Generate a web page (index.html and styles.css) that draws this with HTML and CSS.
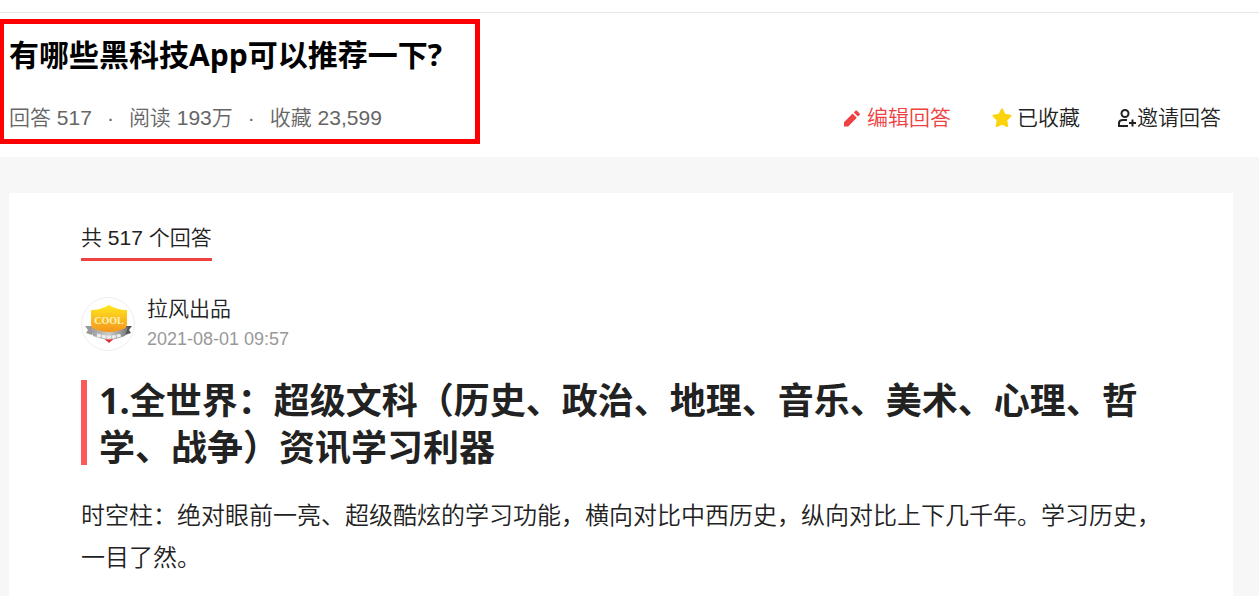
FILE: index.html
```html
<!DOCTYPE html>
<html lang="zh-CN">
<head>
    <meta charset="UTF-8">
    <meta name="viewport" content="width=device-width, initial-scale=1.0">
    <title>有哪些黑科技App可以推荐一下?</title>
    <link rel="stylesheet" href="styles.css">
</head>
<body>
    <div class="topbar"></div>
    <header class="question">
        <h1>有哪些黑科技App可以推荐一下?</h1>
        <div class="question-bar">
            <div class="stats">
                <span>回答 517</span><span class="dot">·</span><span>阅读 193万</span><span class="dot">·</span><span>收藏 23,599</span>
            </div>
            <div class="actions">
                <button type="button" class="edit">
                    <svg width="18" height="18" viewBox="0 0 18 18" fill="#f04142"><path d="M1 13.200 9.600 4.600l4.200 4.200L5.200 17.400H1zM10.800 3.400l1.500-1.500c.6-.6 1.200-.6 1.800 0L16.500 4.300c.6.6.6 1.200 0 1.800L15 7.600z"/></svg>
                    编辑回答
                </button>
                <button type="button" class="star">
                    <svg width="20" height="20" viewBox="0 0 20 20" fill="#fdd30b" stroke="#fdd30b" stroke-width="2" stroke-linejoin="round"><path d="M10 1.500l2.600 5.200 5.900 1-4.200 4.300.9 6L10 15.700l-5.200 2.300.9-6L1.500 7.700l5.900-1z"/></svg>
                    已收藏
                </button>
                <button type="button" class="invite">
                    <svg width="20" height="20" viewBox="0 0 20 20" fill="none" stroke="#222" stroke-width="2"><circle cx="8" cy="5.500" r="3.500"/><path d="M10 12H6c-3 0-4 1-4 3v3h9M12 15h7M15.500 11.500v7"/></svg>
                    邀请回答
                </button>
            </div>
        </div>
        <div class="highlight"></div>
    </header>

    <main class="answers">
        <div class="answers-count">共 517 个回答</div>

        <article>
            <div class="author">
                <div class="avatar">
                    <svg width="52" height="52" viewBox="0 0 52 52">
                        <defs>
                            <linearGradient id="shield" x1="0" y1="0" x2="0" y2="1">
                                <stop offset="0" stop-color="#ffe81f"/>
                                <stop offset="1" stop-color="#f28a1c"/>
                            </linearGradient>
                            <linearGradient id="ribbon">
                                <stop offset="0" stop-color="#999"/>
                                <stop offset=".5" stop-color="#ccc"/>
                                <stop offset="1" stop-color="#777"/>
                            </linearGradient>
                        </defs>
                        <path d="M3 28h7v9l-6-2 2-3z" fill="#999"/>
                        <path d="M50 28h-7v9l6-2-2-3z" fill="#555"/>
                        <path d="M19 38h16l-8 7z" fill="#e4302f"/>
                        <path d="M9 12q10 0 18-5 8 5 18 5v14q-1 7-7 9-11 5-22 0-6-2-7-9z" fill="url(#shield)"/>
                        <path d="M8 29q19 10 38 0l-3 9q-16 7-32 0z" fill="url(#ribbon)"/>
                        <path d="M15 37q12 4 24 0" fill="none" stroke="#eee" stroke-width="3" stroke-dasharray="4 1"/>
                        <text x="27" y="26" text-anchor="middle" class="avatar-text">COOL</text>
                    </svg>
                </div>
                <div>
                    <div class="author-name">拉风出品</div>
                    <time class="author-time" datetime="2021-08-01T09:57">2021-08-01 09:57</time>
                </div>
            </div>
            <h2>1.全世界：超级文科（历史、政治、地理、音乐、美术、心理、哲学、战争）资讯学习利器</h2>
            <p>时空柱：绝对眼前一亮、超级酷炫的学习功能，横向对比中西历史，纵向对比上下几千年。学习历史，一目了然。</p>
        </article>
    </main>
</body>
</html>
```
FILE: styles.css
```css
* {
    box-sizing: border-box;
}
body {
    margin: 0;
    background: #f7f7f7;
    color: #222;
    font-family: "Liberation Sans", "Noto Sans CJK SC", sans-serif;
    font-size: 21px;
    font-weight: 350;
    line-height: 30px;
}
h1, h2, p {
    margin: 0;
}
.topbar {
    height: 13px;
    background: #fff;
    border-bottom: 1px solid #e8e8e8;
}
.question {
    position: relative;
    padding: 20px 38px 24px 9px;
    background: #fff;
}
h1 {
    color: #000;
    font-family: "Open Sans", "Noto Sans CJK SC", sans-serif;
    font-size: 30px;
    line-height: 44px;
}
.question-bar {
    display: flex;
    justify-content: space-between;
    align-items: center;
    margin-top: 26px;
}
.stats {
    color: #666;
}
.dot {
    margin: 0 15px;
}
.actions {
    display: flex;
    gap: 37px;
}
button {
    display: flex;
    align-items: center;
    padding: 0;
    border: 0;
    background: none;
    color: #222;
    font: inherit;
    cursor: pointer;
}
.edit {
    gap: 6px;
    margin-right: 4px;
    color: #f04142;
}
.star {
    gap: 5px;
}
/* red frame round the question title and its stats */
.highlight {
    position: absolute;
    top: 6px;
    left: -1px;
    width: 481px;
    height: 125px;
    border: 5px solid #f00;
    pointer-events: none;
}
.answers {
    margin: 36px 26px 0 9px;
    padding: 30px 72px 36px;
    background: #fff;
}
.answers-count {
    width: fit-content;
    padding-bottom: 5px;
    border-bottom: 3px solid #f04142;
}
.author {
    display: flex;
    align-items: center;
    gap: 12px;
    margin-top: 33px;
}
.avatar {
    width: 54px;
    height: 54px;
    border: 1px solid #eee;
    border-radius: 50%;
    overflow: hidden;
}
.avatar svg {
    display: block;
}
.avatar-text {
    fill: #fff3c0;
    font: bold 10px "Liberation Serif", serif;
}
.author-time {
    display: block;
    color: #999;
    font-size: 18px;
}
h2 {
    position: relative;
    margin-top: 23px;
    padding-left: 18px;
    font-family: "Open Sans", "Noto Sans CJK SC", sans-serif;
    font-size: 36px;
    line-height: 47px;
}
h2::before {
    content: "";
    position: absolute;
    top: 3px;
    bottom: 6px;
    left: 0;
    width: 6px;
    background: #fa5a5a;
}
p {
    margin-top: 24px;
    font-size: 24px;
    line-height: 42px;
}
```
